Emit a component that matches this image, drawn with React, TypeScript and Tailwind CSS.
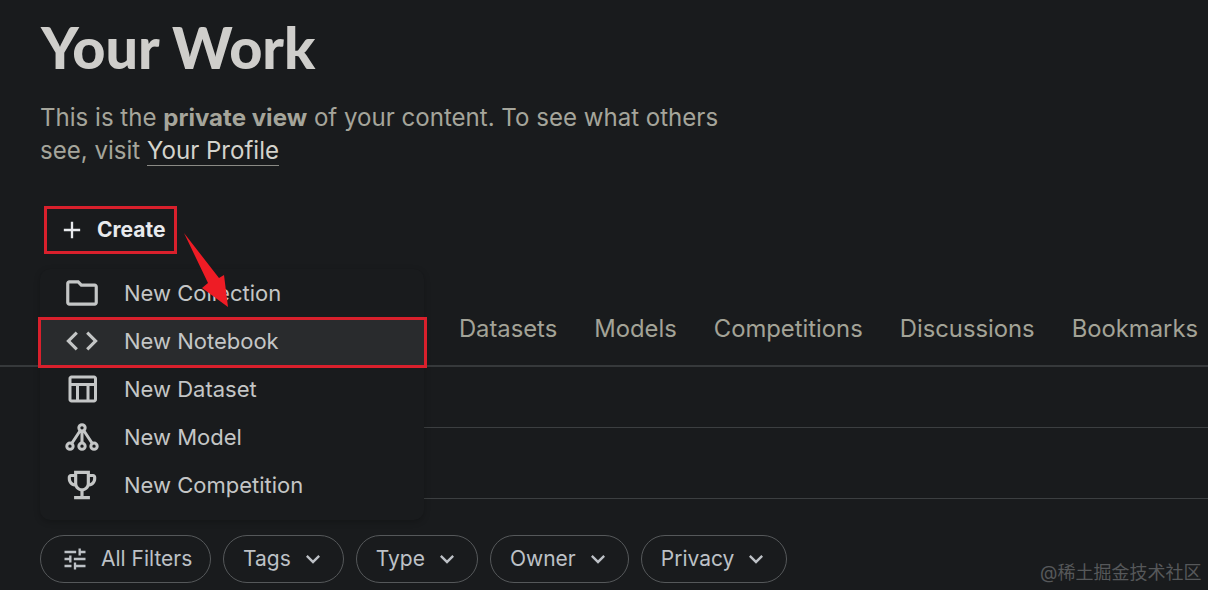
import React from "react";

const Mi = ({ d, size, className }: { d: string; size: number; className?: string }) => (
  <svg width={size} height={size} viewBox="0 0 24 24" fill="currentColor" className={className}>
    <path d={d} />
  </svg>
);

const chevron = "M16.59 8.59L12 13.17 7.41 8.59 6 10l6 6 6-6z";

const ModelIcon = () => (
  <svg width={38} height={38} viewBox="0 0 24 24" fill="none" stroke="currentColor" strokeWidth={1.9}>
    <circle cx="12" cy="6.2" r="2" />
    <circle cx="4.4" cy="17.8" r="2" />
    <circle cx="12" cy="17.8" r="2" />
    <circle cx="19.6" cy="17.8" r="2" />
    <path d="M10.9 7.9 5.5 16.1M12 8.2v7.6M13.1 7.9l5.4 8.2" />
  </svg>
);

const items: { label: string; icon: React.ReactNode; active?: boolean }[] = [
  { label: "New Collection", icon: <Mi size={38} d="M9.17 6l2 2H20v10H4V6h5.17M10 4H4c-1.1 0-1.99.9-1.99 2L2 18c0 1.1.9 2 2 2h16c1.1 0 2-.9 2-2V8c0-1.1-.9-2-2-2h-8l-2-2z" /> },
  { label: "New Notebook", active: true, icon: <Mi size={38} d="M9.4 16.6L4.8 12l4.6-4.6L8 6l-6 6 6 6 1.4-1.4zm5.2 0l4.6-4.6-4.6-4.6L16 6l6 6-6 6-1.4-1.4z" /> },
  { label: "New Dataset", icon: <Mi size={36} className="-ml-[1px]" d="M20 3H5C3.9 3 3 3.9 3 5v14c0 1.1.9 2 2 2h15c1.1 0 2-.9 2-2V5c0-1.1-.9-2-2-2zm0 2v3H5V5h15zm-5 14h-5v-9h5v9zM5 10h3v9H5v-9zm12 9v-9h3v9h-3z" /> },
  { label: "New Model", icon: <ModelIcon /> },
  { label: "New Competition", icon: <Mi size={38} d="M19 5h-2V3H7v2H5c-1.1 0-2 .9-2 2v1c0 2.55 1.92 4.63 4.39 4.94.63 1.5 1.98 2.63 3.61 2.96V19H7v2h10v-2h-4v-3.1c1.63-.33 2.98-1.46 3.61-2.96C19.08 12.63 21 10.55 21 8V7c0-1.1-.9-2-2-2zM5 8V7h2v3.82C5.84 10.4 5 9.3 5 8zm7 6c-1.65 0-3-1.35-3-3V5h6v6c0 1.65-1.35 3-3 3zm7-6c0 1.3-.84 2.4-2 2.82V7h2v1z" /> },
];

const tabs = ["Datasets", "Models", "Competitions", "Discussions", "Bookmarks"];
const pills = ["Tags", "Type", "Owner", "Privacy"];

export default function App() {
  return (
    <div className="relative w-[1208px] h-[590px] overflow-hidden bg-[#191b1d] font-['Inter',sans-serif]">
      <div className="pl-[41px] pt-[16px]">
        <h1 className="font-['Lato',sans-serif] font-black text-[57.5px] leading-[62px] text-[#cfcecb]">Your Work</h1>
        <p className="-ml-[1px] mt-[23px] w-[700px] text-[24.07px] leading-[33px] text-[#a5a59b]">
          This is the <b className="font-bold">private view</b> of your content. To see what others see, visit{" "}
          <span className="text-[#d4d3cc] border-b border-[#8a8a85]">Your Profile</span>
        </p>
        <div className="relative mt-[39px] h-[48px] w-[133px] ml-[3px] flex items-center pl-[14px] gap-[11px] text-[#e8eaed]">
          <Mi size={28} d="M19 13h-6v6h-2v-6H5v-2h6V5h2v6h6v2z" />
          <span className="text-[21px] font-bold">Create</span>
        </div>
      </div>

      <div className="mt-[56px] h-[57px] flex justify-end items-center gap-[37px] pr-[10px] pb-[18px] border-b-2 border-[#36393b] text-[23.8px] text-[#a3a397]">
        {tabs.map((t) => (
          <span key={t}>{t}</span>
        ))}
      </div>
      <div className="ml-[41px] h-[61px] border-b border-[#3c3f41]" />
      <div className="ml-[41px] h-[71px] border-b border-[#3c3f41]" />

      <div className="ml-[40px] mt-[36px] flex gap-[12px] text-[21px] text-[#bdc1c6]">
        <div className="h-[48px] w-[171px] flex items-center pl-[20px] gap-[13px] rounded-full border border-[#55585a]">
          <Mi size={28} className="-mr-[1px]" d="M3 17v2h6v-2H3zM3 5v2h10V5H3zm10 16v-2h8v-2h-8v-2h-2v6h2zM7 9v2H3v2h4v2h2V9H7zm14 4v-2H11v2h10zm-6-4h2V7h4V5h-4V3h-2v6z" />
          <span>All Filters</span>
        </div>
        {pills.map((p) => (
          <div key={p} className="h-[48px] flex items-center pl-[19px] pr-[16px] gap-[8px] rounded-full border border-[#55585a]">
            <span>{p}</span>
            <Mi size={28} d={chevron} />
          </div>
        ))}
      </div>

      {/* dropdown menu */}
      <div className="absolute left-[40px] top-[269px] w-[384px] h-[251px] rounded-[10px] bg-[#191b1d] shadow-[0_2px_6px_rgba(0,0,0,0.22)] text-[22px] text-[#c4c6c6]">
        {items.map((it) => (
          <div key={it.label} className={`h-[48px] flex items-center pl-[23px] gap-[23px] ${it.active ? "bg-[#292b2d]" : ""}`}>
            <div className="w-[38px] flex justify-center shrink-0">{it.icon}</div>
            <span>{it.label}</span>
          </div>
        ))}
      </div>

      {/* annotations */}
      <div className="absolute left-[44px] top-[206px] w-[133px] h-[48px] border-[3px] border-[#d9202c]" />
      <div className="absolute left-[38px] top-[317px] w-[389px] h-[51px] border-[3px] border-[#d9202c]" />
      <svg className="absolute left-0 top-0" width={1208} height={590} viewBox="0 0 1208 590">
        <polygon points="184,233 219,278 224,275 228,307 202,288 208,283" fill="#ee1c25" />
      </svg>
      <div className="absolute left-[1040px] top-[561px] text-[18px] leading-[24px] text-[#56585a] font-['Inter','Noto_Sans_CJK_SC',sans-serif]">
        @稀土掘金技术社区
      </div>
    </div>
  );
}
